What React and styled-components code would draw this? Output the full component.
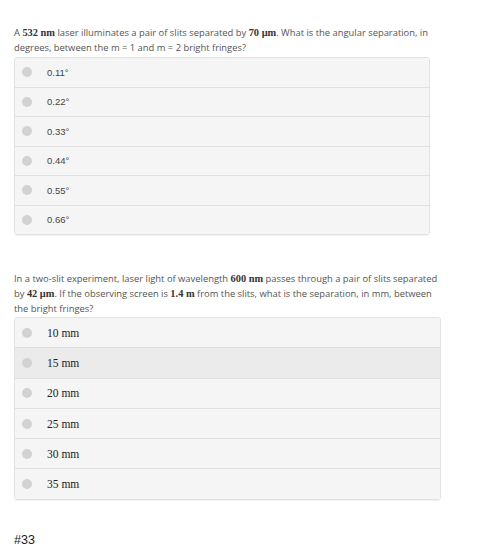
import styled, { createGlobalStyle } from 'styled-components';

const GlobalStyle = createGlobalStyle`
  body {
    margin: 0;
    background: #ffffff;
    font-family: "Open Sans", "Liberation Sans", sans-serif;
  }
`;

const Page = styled.main`
  padding: 25px 0 0 14px;
`;

const Question = styled.section`
  margin-bottom: ${(p) => p.$gap}px;
`;

const Prompt = styled.p`
  margin: 0 0 ${(p) => p.$after}px;
  width: ${(p) => p.$width}px;
  font-family: "Open Sans", sans-serif;
  font-size: 9.4px;
  line-height: 15px;
  color: #555555;
`;

const Math = styled.b`
  font-family: "Liberation Serif", serif;
  font-size: 10.4px;
  line-height: 1;
  color: #333333;
`;

const Choices = styled.ul`
  list-style: none;
  margin: 0;
  padding: 0;
  width: ${(p) => p.$width}px;
  border: 1px solid #e2e2e2;
  border-radius: 3px;
  box-shadow: 0 1px 1px rgba(0, 0, 0, 0.06);
  overflow: hidden;
`;

const Choice = styled.li`
  display: flex;
  align-items: center;
  height: ${(p) => p.$h}px;
  padding-left: 7px;
  background: ${(p) => (p.$active ? '#ebebeb' : '#f5f5f5')};
  & + & {
    border-top: 1px solid #e0e0e0;
  }
`;

const Radio = styled.span`
  width: 10px;
  height: 10px;
  border-radius: 50%;
  background: #d2d2d2;
  margin-right: 15px;
  flex-shrink: 0;
`;

const Label = styled.span`
  font-family: ${(p) => (p.$serif ? '"Liberation Serif", serif' : '"Liberation Sans", Arial, sans-serif')};
  font-size: ${(p) => (p.$serif ? '11.5px' : '9.5px')};
  color: ${(p) => (p.$serif ? '#222222' : '#444444')};
`;

const Tag = styled.div`
  font-family: "Liberation Sans", Arial, sans-serif;
  font-size: 12.5px;
  color: #222222;
`;

const first = ['0.11°', '0.22°', '0.33°', '0.44°', '0.55°', '0.66°'];
const second = ['10 mm', '15 mm', '20 mm', '25 mm', '30 mm', '35 mm'];

export default function App() {
  return (
    <Page>
      <GlobalStyle />
      <Question $gap={36}>
        <Prompt $width={416} $after={2}>
          A <Math>532 nm</Math> laser illuminates a pair of slits separated by <Math>70 μm</Math>. What is the
          angular separation, in degrees, between the m = 1 and m = 2 bright fringes?
        </Prompt>
        <Choices $width={414}>
          {first.map((t) => (
            <Choice key={t} $h={28.5}>
              <Radio />
              <Label>{t}</Label>
            </Choice>
          ))}
        </Choices>
      </Question>
      <Question $gap={33}>
        <Prompt $width={428} $after={1}>
          In a two-slit experiment, laser light of wavelength <Math>600 nm</Math> passes through a pair of slits
          separated by <Math>42 μm</Math>. If the observing screen is <Math>1.4 m</Math> from the slits, what is the
          separation, in mm, between the bright fringes?
        </Prompt>
        <Choices $width={425}>
          {second.map((t, i) => (
            <Choice key={t} $h={29.3} $active={i === 1}>
              <Radio />
              <Label $serif>{t}</Label>
            </Choice>
          ))}
        </Choices>
      </Question>
      <Tag>#33</Tag>
    </Page>
  );
}
